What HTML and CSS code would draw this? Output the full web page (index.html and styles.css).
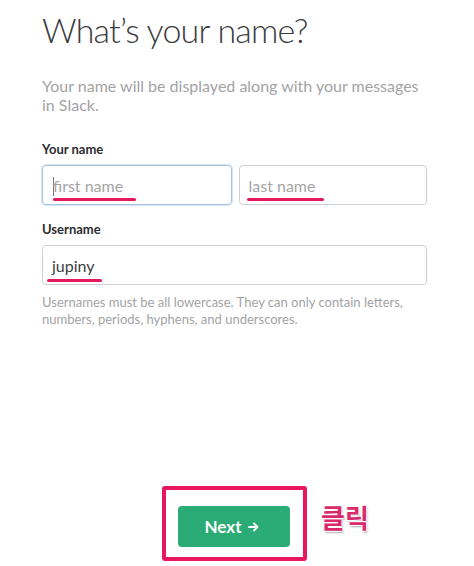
FILE: index.html
```html
<!DOCTYPE html>
<html lang="en">
<head>
<meta charset="utf-8">
<title>What’s your name?</title>
<link rel="stylesheet" href="styles.css">
</head>
<body>
<main class="page">
  <h1 class="title">What’s your name?</h1>
  <p class="lead">Your name will be displayed along with your messages in Slack.</p>

  <div class="label label-name">Your name</div>
  <div class="name-row">
    <div class="field field-focused"><span class="caret"></span><span class="mark mark-first">first name</span></div>
    <div class="field"><span class="mark mark-last">last name</span></div>
  </div>

  <div class="label label-user">Username</div>
  <div class="field field-user"><span class="mark mark-user">jupiny</span></div>
  <p class="help">Usernames must be all lowercase. They can only contain letters, numbers, periods, hyphens, and underscores.</p>

  <div class="actions">
    <div class="highlight">
      <button class="next" type="button">Next <svg class="arrow" width="11" height="10" viewBox="0 0 11 10" aria-hidden="true"><path d="M1 5H9.5M6 1.5L9.5 5L6 8.5" fill="none" stroke="#ffffff" stroke-width="1.8" stroke-linecap="round" stroke-linejoin="round"/></svg></button>
    </div>
    <span class="click">클릭</span>
  </div>
</main>
</body>
</html>
```

FILE: styles.css
```css
* { box-sizing: border-box; }

html, body {
  margin: 0;
  padding: 0;
  background: #ffffff;
}

body {
  font-family: Lato, "Noto Sans", "Noto Sans CJK KR", sans-serif;
  color: #2c2d30;
}

.page {
  width: 474px;
  padding: 9.5px 0 0 42px;
}

.title {
  margin: 0;
  font-size: 34px;
  line-height: 1.2;
  font-weight: 300;
  color: #3a3b3e;
  letter-spacing: -0.8px;
}

.lead {
  margin: 25.5px 0 0;
  width: 385px;
  font-size: 16px;
  line-height: 19px;
  color: #a3a3a6;
}

.label {
  font-size: 13px;
  line-height: 16px;
  font-weight: 700;
  color: #2c2d30;
}

.label-name { margin-top: 27.3px; }
.label-user { margin-top: 16px; }

.name-row {
  display: flex;
  gap: 7px;
  width: 385px;
  margin-top: 8px;
}

.field {
  position: relative;
  flex: 1;
  height: 40px;
  border: 1px solid #cfcfd1;
  border-radius: 4px;
  padding-left: 9px;
  display: flex;
  align-items: center;
  font-size: 16px;
  color: #a4a4a6;
}

.field-focused {
  border-color: #a6c3de;
  box-shadow: 0 0 0 1px #d9e6f3;
  padding-left: 10px;
}

.field-user {
  width: 385px;
  flex: none;
  margin-top: 8px;
  color: #3d3e41;
}

.caret {
  position: absolute;
  left: 10px;
  top: 11px;
  width: 1px;
  height: 19px;
  background: #777;
}

.mark {
  position: relative;
  line-height: 20px;
  top: 1px;
}

.mark::after {
  content: "";
  position: absolute;
  left: 0;
  bottom: -5px;
  height: 3px;
  border-radius: 2px;
  background: #e5195a;
}

.mark-first::after { width: 83px; }
.mark-last::after { width: 77px; left: -2px; }
.mark-user::after { width: 55px; left: -5px; bottom: -6px; }

.help {
  margin: 8.5px 0 0;
  width: 385px;
  font-size: 13px;
  line-height: 17px;
  color: #a3a3a6;
}

.actions {
  display: flex;
  align-items: flex-start;
  margin-top: 158.5px;
  margin-left: 120px;
}

.highlight {
  border: 4px solid #e8175d;
  border-radius: 3px;
  padding: 16px 13px 10px 12px;
}

.next {
  display: flex;
  align-items: center;
  justify-content: center;
  gap: 7px;
  width: 112px;
  height: 41px;
  border: 0;
  border-radius: 4px;
  background: #2bac76;
  color: #ffffff;
  font-family: Lato, "Noto Sans", sans-serif;
  font-size: 17px;
  font-weight: 700;
  padding: 0 4px 1px 0;
}

.arrow {
  display: block;
  margin-top: 1px;
}

.click {
  margin-left: 14px;
  margin-top: 16px;
  font-family: "Noto Sans CJK KR", sans-serif;
  font-size: 26px;
  line-height: 30px;
  font-weight: 700;
  color: #d82a6c;
  letter-spacing: 0;
  text-shadow: -1px 0 #fff, 1px 0 #fff, 0 -1px #fff, 0 1px #fff, 1px 2px 2px rgba(0,0,0,0.35);
}
```
